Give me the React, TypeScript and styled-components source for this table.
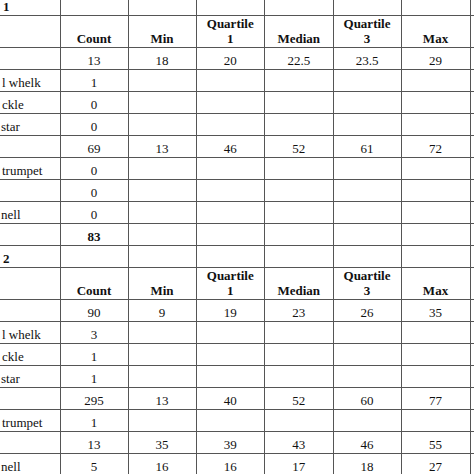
import styled, { createGlobalStyle } from 'styled-components';

const GlobalStyle = createGlobalStyle`
  html, body {
    margin: 0;
    padding: 0;
    background: #fff;
    overflow: hidden;
  }
`;

const Page = styled.div`
  width: 474px;
  height: 474px;
  overflow: hidden;
  background: #fff;
`;

const Table = styled.table`
  margin-top: -7px;
  border-collapse: collapse;
  table-layout: fixed;
  width: 538px;
  font-family: 'Liberation Serif', 'Times New Roman', serif;
  font-size: 13px;
  color: #111;
`;

const Row = styled.tr<{ $h: number }>`
  height: ${(p) => p.$h}px;
`;

const Cell = styled.td<{ $bold?: boolean }>`
  border: 1px solid #555;
  padding: 0 2px 1px;
  text-align: center;
  vertical-align: bottom;
  white-space: nowrap;
  overflow: hidden;
  font-weight: ${(p) => (p.$bold ? 700 : 400)};
  line-height: 15px;
`;

const Label = styled.td<{ $shift?: number; $bold?: boolean }>`
  border: 1px solid #555;
  border-left: none;
  padding: 0 0 1px 0;
  text-align: left;
  vertical-align: bottom;
  white-space: nowrap;
  overflow: hidden;
  line-height: 15px;
  font-weight: ${(p) => (p.$bold ? 700 : 400)};
  text-indent: ${(p) => p.$shift ?? 0}px;
`;

type Line = { label?: string; shift?: number; values: string[]; bold?: boolean };

const heads = ['Count', 'Min', 'Quartile\n1', 'Median', 'Quartile\n3', 'Max'];

const sections: { title: string; lines: Line[] }[] = [
  {
    title: '1',
    lines: [
      { values: ['13', '18', '20', '22.5', '23.5', '29'] },
      { label: 'l whelk', shift: 2, values: ['1'] },
      { label: 'ckle', shift: 2, values: ['0'] },
      { label: 'star', shift: 1, values: ['0'] },
      { values: ['69', '13', '46', '52', '61', '72'] },
      { label: 'trumpet', shift: 2, values: ['0'] },
      { values: ['0'] },
      { label: 'nell', shift: 1, values: ['0'] },
      { values: ['83'], bold: true },
    ],
  },
  {
    title: '2',
    lines: [
      { values: ['90', '9', '19', '23', '26', '35'] },
      { label: 'l whelk', shift: 2, values: ['3'] },
      { label: 'ckle', shift: 2, values: ['1'] },
      { label: 'star', shift: 1, values: ['1'] },
      { values: ['295', '13', '40', '52', '60', '77'] },
      { label: 'trumpet', shift: 2, values: ['1'] },
      { values: ['13', '35', '39', '43', '46', '55'] },
      { label: 'nell', shift: 1, values: ['5', '16', '16', '17', '18', '27'] },
    ],
  },
];

const widths = [60, 68, 68, 68.5, 68.5, 68, 69, 68];

export default function App() {
  return (
    <Page>
      <GlobalStyle />
      <Table>
        <colgroup>
          {widths.map((w, i) => (
            <col key={i} style={{ width: w }} />
          ))}
        </colgroup>
        <tbody>
          {sections.map((s) => [
            <Row key={s.title + 't'} $h={22}>
              <Label $bold $shift={3}>
                {s.title}
              </Label>
              {Array.from({ length: 7 }).map((_, i) => (
                <Cell key={i} />
              ))}
            </Row>,
            <Row key={s.title + 'h'} $h={32}>
              <Label />
              {heads.map((h) => (
                <Cell key={h} $bold>
                  {h.split('\n').map((part, i) => (
                    <span key={i}>
                      {i > 0 && <br />}
                      {part}
                    </span>
                  ))}
                </Cell>
              ))}
              <Cell />
            </Row>,
            ...s.lines.map((l, idx) => (
              <Row key={s.title + idx} $h={22}>
                <Label $shift={l.shift}>{l.label ?? ''}</Label>
                {Array.from({ length: 7 }).map((_, i) => (
                  <Cell key={i} $bold={l.bold}>
                    {l.values[i] ?? ''}
                  </Cell>
                ))}
              </Row>
            )),
          ])}
        </tbody>
      </Table>
    </Page>
  );
}
